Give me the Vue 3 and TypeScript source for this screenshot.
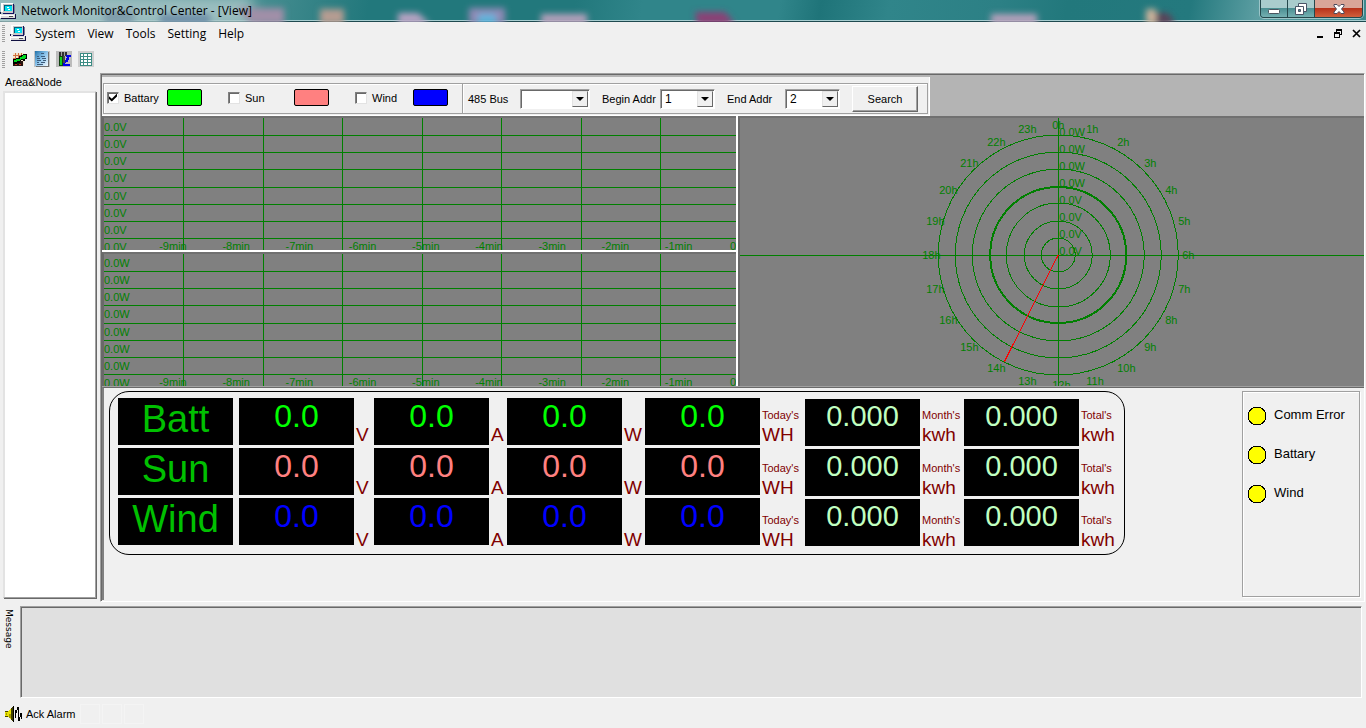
<script setup lang="ts">
import { ref } from 'vue'

interface Channel {
  name: string
  label: string
  tone: string
}

interface Reading {
  caption: string
  unit: string
  value: string
}

const menus: string[] = ['System', 'View', 'Tools', 'Setting', 'Help']

const channels: Channel[] = [
  { name: 'Battary', label: 'Batt', tone: 'batt' },
  { name: 'Sun', label: 'Sun', tone: 'sun' },
  { name: 'Wind', label: 'Wind', tone: 'wind' },
]

const readings: Reading[] = [
  { caption: '', unit: 'V', value: '0.0' },
  { caption: '', unit: 'A', value: '0.0' },
  { caption: '', unit: 'W', value: '0.0' },
  { caption: "Today's", unit: 'WH', value: '0.0' },
  { caption: "Month's", unit: 'kwh', value: '0.000' },
  { caption: "Total's", unit: 'kwh', value: '0.000' },
]

const alarms: string[] = ['Comm Error', 'Battary', 'Wind']

const shown = ref<string[]>(['Battary'])
const bus = ref<string>('')
const beginAddr = ref<string>('1')
const endAddr = ref<string>('2')

const charts = [
  { unit: 'V', title: 'Voltage' },
  { unit: 'W', title: 'Power' },
]
const gridRows = [0, 1, 2, 3, 4, 5, 6, 7].map((i) => Math.round((i * 137) / 8))
const gridCols = [1, 2, 3, 4, 5, 6, 7].map((i) => `${(i * 12.58).toFixed(2)}%`)
const minutes = [9, 8, 7, 6, 5, 4, 3, 2, 1, 0].map((m) => ({
  text: m === 0 ? '0' : `-${m}min`,
  x: `${(10 - m) * 10}%`,
  dx: m === 0 ? -6 : -8,
}))

const rings = [17, 34, 52, 86, 103, 120]
const ringLabels = ['W', 'W', 'W', 'W', 'V', 'V', 'V', 'V'].map((u, i) => ({
  text: `0.0${u}`,
  y: -119 + i * 17,
}))
const hours = Array.from({ length: 24 }, (_, h) => {
  const angle = (h * Math.PI) / 12
  return {
    text: `${h}h`,
    x: Math.round(-6 + 130 * Math.sin(angle)),
    y: Math.round(4 - 130 * Math.cos(angle)),
  }
})
</script>

<template>
  <div class="app">
    <header class="titlebar">
      <svg class="glass" width="100%" height="22" aria-hidden="true">
        <defs>
          <filter id="soft" x="-20%" y="-40%" width="140%" height="180%">
            <feGaussianBlur stdDeviation="3" />
          </filter>
          <filter id="softer" x="-20%" y="-60%" width="140%" height="220%">
            <feGaussianBlur stdDeviation="7" />
          </filter>
          <symbol id="pc" viewBox="0 0 16 16">
            <path d="M1 0h12v10H1z" fill="#c8c8c8" />
            <path d="M1 0h12v1H1zM1 0h2v9H1z" fill="#fff" />
            <path d="M4 2h8v1H4zM4 2h1v6H4z" fill="#006080" />
            <path d="M5 3h7v5H5z" fill="#00e0f0" />
            <path d="M7 4h2v1H7zM8 6h2v1H8z" fill="#fff" />
            <path d="M13 1h1v9h-1zM3 10h11v1H3z" fill="#101060" />
            <path d="M14 2h1v8h-1z" fill="#808090" />
            <path d="M0 11h15v4H0z" fill="#dcdcdc" />
            <path d="M0 11h1v4H0zM1 12h13v1H1z" fill="#fff" />
            <path d="M9 13h4v1H9z" fill="#505050" />
            <path d="M1 15h15v1H1zM15 11h1v4h-1zM0 9h1v2H0z" fill="#101040" />
          </symbol>
        </defs>
        <g filter="url(#softer)">
          <rect x="-10" y="-4" width="262" height="32" fill="#a9c7c8" opacity="0.85" />
        </g>
        <g filter="url(#soft)">
          <rect x="104" y="10" width="30" height="14" fill="#7f9dab" />
          <rect x="160" y="14" width="50" height="10" fill="#6f90a8" />
          <path d="M236 8h48v16h-32z" fill="#a08fa8" />
          <rect x="320" y="9" width="24" height="15" fill="#b59c92" />
          <path d="M398 13h20l12 11h-32z" fill="#b9a4c4" />
          <rect x="469" y="8" width="36" height="16" fill="#9089b5" />
          <rect x="478" y="14" width="18" height="10" fill="#62b4dc" />
          <rect x="541" y="14" width="46" height="10" fill="#b6a1bc" />
          <path d="M695 12h30l10 12h-38z" fill="#8c3f76" />
          <rect x="991" y="14" width="46" height="10" fill="#b6a1bc" />
          <rect x="1146" y="9" width="10" height="15" fill="#cdb49c" />
          <path d="M1156 13h12l8 11h-20z" fill="#5b4358" />
        </g>
      </svg>
      <svg class="pc" shape-rendering="crispEdges" aria-hidden="true"><use href="#pc" /></svg>
      <h1>Network Monitor&amp;Control Center - [View]</h1>
      <div class="caption">
        <button type="button" aria-label="Minimize">
          <svg width="14" height="14" viewBox="0 0 14 14"><rect x="1.500" y="7.500" width="11" height="4" rx="1" fill="#fff" stroke="#4a5560" /></svg>
        </button>
        <button type="button" aria-label="Restore">
          <svg width="14" height="14" viewBox="0 0 14 14">
            <path d="M4.500 1.500h8v8h-8z" fill="#fff" stroke="#4a5568" />
            <path d="M1.500 4.500h8v8h-8z" fill="#fff" stroke="#4a5568" />
            <path d="M4.500 7.500h2v2h-2z" fill="#4e8f92" stroke="#4a5568" />
          </svg>
        </button>
        <button type="button" class="close" aria-label="Close">
          <svg width="14" height="14" viewBox="0 0 14 14">
            <path d="M2 2.500h3l2 2 2-2h3v1.500L9.500 7l2.500 3v1.500H9l-2-2-2 2H2V10l2.500-3L2 4z" fill="#fff" stroke="#4d4a5c" />
          </svg>
        </button>
      </div>
    </header>

    <nav class="menubar" aria-label="Main">
      <span class="grip"></span>
      <svg class="pc" shape-rendering="crispEdges" aria-hidden="true"><use href="#pc" /></svg>
      <button v-for="m in menus" :key="m" type="button" class="menu">{{ m }}</button>
      <div class="mdi">
        <button type="button" aria-label="Minimize view">
          <svg width="9" height="9" viewBox="0 0 9 9" shape-rendering="crispEdges"><path d="M1 7h6v2H1z" /></svg>
        </button>
        <button type="button" aria-label="Restore view">
          <svg width="9" height="9" viewBox="0 0 9 9" shape-rendering="crispEdges">
            <path fill-rule="evenodd" d="M2 0h6v6H6V5h1V2H3v1H2zM0 3h6v6H0zM1 5h4v3H1z" />
          </svg>
        </button>
        <button type="button" aria-label="Close view">
          <svg width="9" height="9" viewBox="0 0 9 9"><path d="M1 1l7 7M8 1L1 8" stroke="#000" stroke-width="1.700" /></svg>
        </button>
      </div>
    </nav>

    <div class="toolbar">
      <span class="grip"></span>
      <button type="button" aria-label="Trend">
        <svg viewBox="0 0 16 16" shape-rendering="crispEdges">
          <path d="M1 2h11v12H1z" fill="#f4e4cc" />
          <path d="M1 4h11v1H1zM1 7h9v1H1zM3 2h1v7H3zM6 2h1v6H6zM9 2h1v4H9z" fill="#d07040" />
          <path d="M1 10h10v5H1z" fill="#281410" />
          <path d="M3 13h2v1H3zM7 13h2v1H7zM7 11h1v1H7z" fill="#c83020" />
          <path d="M1 8h3V7h3V5h2V4h2V3h4v5h-2v2h-2V9H9v1H8v2H5v1H1z" fill="#000" />
          <path d="M2 9h2V8h4V6h2V5h1V4h3v3h-1v1H9v1H8v1H5v1H2z" fill="#00d820" />
        </svg>
      </button>
      <button type="button" aria-label="Report">
        <svg viewBox="0 0 16 16" shape-rendering="crispEdges">
          <defs>
            <linearGradient id="sheet" x1="0" y1="0" x2="1" y2="1">
              <stop offset="0" stop-color="#2070a8" />
              <stop offset="0.500" stop-color="#8cc4ec" />
              <stop offset="1" stop-color="#f4faff" />
            </linearGradient>
          </defs>
          <path d="M0 0h16v16H0z" fill="#c4c4c4" />
          <path d="M1 0h13v15H1z" fill="url(#sheet)" />
          <path d="M14 1h1v15H2v-1h12z" fill="#707070" />
          <path d="M7 2h3v1H7zM3 5h2v1H3zM7 5h4v1H7zM3 7h3v1H3zM8 7h4v1H8zM3 9h4v1H3zM9 9h3v1H9zM3 11h2v1H3zM7 11h4v1H7zM3 13h6v1H3z" fill="#3c5c7c" />
        </svg>
      </button>
      <button type="button" aria-label="Devices">
        <svg viewBox="0 0 16 16" shape-rendering="crispEdges">
          <path d="M0 0h16v16H0z" fill="#bcbcbc" />
          <path d="M3 1h8v4H3z" fill="#303030" />
          <path d="M5 1h1v4H5zM8 1h1v4H8z" fill="#a0a0a0" />
          <path d="M3 5h4v10H3z" fill="#104010" />
          <path d="M4 6h2v8H4z" fill="#10d020" />
          <path d="M7 5h2v9H7z" fill="#484848" />
          <path d="M10 4h5v2h-2v3h-1v2h-2v1h-1v1h5v2H7v-3h2V9h1V7h1V6h-1z" fill="#0000e8" />
        </svg>
      </button>
      <button type="button" aria-label="Table">
        <svg viewBox="0 0 16 16" shape-rendering="crispEdges">
          <path d="M0 0h16v16H0z" fill="#cfcfcf" />
          <path d="M3 2h10v12H3z" fill="#fff" />
          <path fill-rule="evenodd" d="M2 2h12v13H2zM3 3v2h2V3zM6 3v2h3V3zM10 3v2h3V3zM3 6v2h2V6zM6 6v2h3V6zM10 6v2h3V6zM3 9v2h2V9zM6 9v2h3V9zM10 9v2h3V9zM3 12v2h2v-2zM6 12v2h3v-2zM10 12v2h3v-2z" fill="#3c8c84" />
        </svg>
      </button>
    </div>

    <div class="workspace">
      <aside class="area">
        <h2>Area&amp;Node</h2>
        <div class="tree"></div>
      </aside>

      <main class="view">
        <div class="band">
          <form class="controls" @submit.prevent>
            <div class="series">
              <div v-for="c in channels" :key="c.name" class="pick">
                <input :id="`show-${c.tone}`" v-model="shown" type="checkbox" :value="c.name" />
                <label :for="`show-${c.tone}`">{{ c.name }}</label>
                <span class="swatch" :class="c.tone"></span>
              </div>
            </div>
            <div class="query">
              <label for="bus" class="short">485 Bus</label>
              <span class="combo wide">
                <select id="bus" v-model="bus"><option value=""></option><option>COM1</option></select>
                <i></i>
              </span>
              <label for="begin">Begin Addr</label>
              <span class="combo">
                <select id="begin" v-model="beginAddr"><option>1</option><option>2</option></select>
                <i></i>
              </span>
              <label for="end">End Addr</label>
              <span class="combo">
                <select id="end" v-model="endAddr"><option>1</option><option>2</option></select>
                <i></i>
              </span>
              <button type="submit" class="search">Search</button>
            </div>
          </form>
        </div>

        <div class="plots">
          <div class="trends">
            <svg v-for="c in charts" :key="c.unit" class="trend" role="img" :aria-label="c.title">
              <g class="lines">
                <line v-for="y in gridRows.slice(1)" :key="y" x1="0" x2="100%" :y1="y" :y2="y" />
                <line v-for="x in gridCols" :key="x" :x1="x" :x2="x" y1="0" y2="100%" />
              </g>
              <text v-for="y in gridRows" :key="y" x="0" :y="y + 13">0.0{{ c.unit }}</text>
              <text v-for="m in minutes" :key="m.text" :x="m.x" :dx="m.dx" y="132">{{ m.text }}</text>
            </svg>
          </div>
          <svg class="polar" role="img" aria-label="Daily power">
            <line class="axis" x1="0" x2="100%" y1="137" y2="137" />
            <svg x="51%" y="137" overflow="visible">
              <line class="axis" x1="0" x2="0" y1="-137" y2="140" />
              <circle v-for="r in rings" :key="r" :r="r" />
              <circle class="heavy" r="68" />
              <text v-for="l in ringLabels" :key="l.y" x="1" :y="l.y">{{ l.text }}</text>
              <text v-for="h in hours" :key="h.text" :x="h.x" :y="h.y">{{ h.text }}</text>
              <line class="hand" x1="0" y1="0" x2="-54" y2="107" />
            </svg>
          </svg>
        </div>

        <div class="lower">
          <section class="readouts">
            <div v-for="c in channels" :key="c.label" class="row" :class="c.tone">
              <div class="lcd name">{{ c.label }}</div>
              <template v-for="(r, i) in readings" :key="i">
                <div class="lcd" :class="{ total: i > 3 }">{{ r.value }}</div>
                <div class="unit">
                  <small v-if="r.caption">{{ r.caption }}</small>
                  <b>{{ r.unit }}</b>
                </div>
              </template>
            </div>
          </section>
          <ul class="alarms">
            <li v-for="a in alarms" :key="a">
              <svg width="20" height="20" viewBox="0 0 20 20" shape-rendering="crispEdges" aria-hidden="true">
                <circle cx="10" cy="10" r="9" fill="#ff0" stroke="#000" />
              </svg>
              {{ a }}
            </li>
          </ul>
        </div>
      </main>
    </div>

    <section class="message">
      <h2>Message</h2>
      <div class="log"></div>
    </section>

    <footer class="status">
      <button type="button">
        <svg width="18" height="18" viewBox="0 0 18 18" shape-rendering="crispEdges" aria-hidden="true">
          <path d="M1 6h3l5-5v16l-5-5H1z" fill="#404000" />
          <path d="M1 7h3v4H1zM4 6h1v6H4zM5 5h1v8H5zM6 4h1v10H6z" fill="#e8e000" />
          <path d="M2 8h1v2H2zM5 9h2v4H5z" fill="#a09800" />
          <path d="M9 1v16M11 5v8M12 8l2-6 1 14 2-8v6" fill="none" stroke="#000" />
        </svg>
        Ack Alarm
      </button>
      <span></span><span></span><span></span>
    </footer>
  </div>
</template>

<style>
body {
  margin: 0;
  background: #f0f0f0;
}
</style>

<style scoped>
* {
  box-sizing: border-box;
}
.app {
  display: flex;
  flex-direction: column;
  min-height: 100vh;
  background: #f0f0f0;
  color: #000;
  font: 11px/14px "Liberation Sans", Arial, sans-serif;
}
button,
select,
input {
  margin: 0;
  padding: 0;
  border: 0;
  border-radius: 0;
  background: none;
  color: inherit;
  font: inherit;
}
h1,
h2 {
  margin: 0;
  font: inherit;
}
svg {
  display: block;
  flex: none;
}
.pc {
  width: 16px;
  height: 16px;
}

.titlebar {
  position: relative;
  display: flex;
  align-items: center;
  height: 22px;
  border-bottom: 1px solid #1f4a50;
  box-shadow: inset 0 -1px #a6cdd0;
  background: linear-gradient(100deg, #74a5a8 0, #4b9093 18%, #22787c 27%, #22787c 42%, #30858a 47%, #30858a 57%, #1f7479 60%, #30858a 65%, #2c8085 73%, #22787c 78%, #24797e 87%, #5c9ea2 92%, #3b888c 100%);
}
.glass {
  position: absolute;
  inset: 0;
}
.titlebar > .pc {
  position: relative;
}
.titlebar h1 {
  position: relative;
  margin-left: 5px;
  font: 12px/20px "Open Sans", "Noto Sans", sans-serif;
  white-space: nowrap;
}
.caption {
  position: relative;
  display: flex;
  align-self: flex-start;
  height: 18px;
  margin: 0 3px 0 auto;
  border: 1px solid #24484c;
  border-top: 0;
  border-radius: 0 0 4px 4px;
  box-shadow: 0 0 0 1px #9cc5c8;
  overflow: hidden;
}
.caption button {
  display: flex;
  align-items: center;
  justify-content: center;
  width: 27px;
  border-right: 1px solid #24484c;
  background: linear-gradient(#a9cccd 0 45%, #4c9093 50%, #74b0b2);
}
.caption .close {
  width: 47px;
  border: 0;
  background: linear-gradient(#d9a598 0 45%, #b8331b 50%, #d0603c);
}

.menubar {
  display: flex;
  align-items: center;
  height: 23px;
  font: 12px/20px "Open Sans", "Noto Sans", sans-serif;
}
.grip {
  width: 3px;
  height: 17px;
  margin-left: 2px;
  background: repeating-linear-gradient(#a0a0a0 0 1px, #f0f0f0 1px 2px);
}
.menubar .pc {
  margin: 0 3px 2px 5px;
}
.menu {
  padding: 0 6px;
}
.mdi {
  display: flex;
  gap: 9px;
  margin: 0 5px 0 auto;
}

.toolbar {
  display: flex;
  align-items: center;
  gap: 6px;
  height: 28px;
}
.toolbar .grip {
  margin-right: 1px;
}
.toolbar button,
.toolbar svg {
  width: 16px;
  height: 16px;
}

.workspace {
  display: flex;
  flex: 1;
}
.area {
  display: flex;
  flex-direction: column;
  width: 97px;
  margin: 1px 3px 4px 0;
  padding-left: 3px;
}
.area h2 {
  padding: 0 0 1px 2px;
  line-height: 16px;
}
.tree {
  flex: 1;
  margin-right: 1px;
  border: 1px solid #e3e3e3;
  border-width: 2px 1px 1px 2px;
  border-right-color: #a0a0a0;
  border-bottom-color: #a0a0a0;
  box-shadow: 1px 1px #696969;
  background: #fff;
}

.view {
  display: flex;
  flex: 1;
  flex-direction: column;
  min-width: 0;
  margin-right: 1px;
  border-top: 1px solid #a0a0a0;
  border-left: 1px solid #a0a0a0;
  border-right: 1px solid #fff;
  border-bottom: 1px solid #fff;
  box-shadow: inset 1px 1px #696969;
  padding: 1px 0 1px 1px;
}
.band {
  padding-top: 2px;
  background: #b4b4b4;
}
.controls {
  display: flex;
  width: 828px;
  height: 39px;
  padding: 6px 2px 2px 1px;
  background: #f0f0f0;
  box-shadow: inset -1px -1px #fff;
}
.series,
.query {
  display: flex;
  align-items: center;
  border: 1px solid #a0a0a0;
  box-shadow: inset 1px 1px #fff;
}
.series {
  gap: 26px;
  width: 359px;
  padding: 0 0 2px 3px;
  border-right: 0;
}
.query {
  flex: 1;
  padding-left: 5px;
}
.pick {
  display: flex;
  align-items: center;
  width: 95px;
}
.pick:nth-child(2) {
  width: 101px;
}
.pick:nth-child(3) {
  width: 93px;
}
.pick input {
  appearance: none;
  display: grid;
  place-content: center;
  width: 12px;
  height: 12px;
  margin-right: 5px;
  border: 1px solid #808080;
  border-right-color: #e3e3e3;
  border-bottom-color: #e3e3e3;
  box-shadow: inset 1px 1px #696969;
  background: #fff;
}
.pick input:checked::before {
  content: "";
  width: 8px;
  height: 8px;
  background: #000;
  clip-path: polygon(0 35%, 35% 65%, 100% 0, 100% 38%, 35% 100%, 0 70%);
}
.swatch {
  width: 35px;
  height: 17px;
  margin-left: auto;
  border: 1px solid #000;
  border-radius: 2px;
}
.swatch.batt {
  background: #0f0;
}
.swatch.sun {
  background: #ff8080;
}
.swatch.wind {
  background: #00f;
}
.query label {
  width: 58px;
  white-space: nowrap;
}
.query label.short {
  width: 52px;
}
.combo {
  position: relative;
  width: 55px;
  height: 20px;
  margin-right: 12px;
  border: 1px solid #a0a0a0;
  border-right-color: #fff;
  border-bottom-color: #fff;
  background: #fff;
  box-shadow: inset 1px 1px #696969;
}
.combo.wide {
  width: 70px;
}
.combo select {
  appearance: none;
  width: 100%;
  height: 18px;
  padding: 0 16px 0 4px;
  font-size: 12px;
}
.combo i {
  position: absolute;
  top: 1px;
  right: 1px;
  bottom: 1px;
  display: grid;
  place-content: center;
  width: 16px;
  border: 1px solid #e3e3e3;
  border-right-color: #696969;
  border-bottom-color: #696969;
  background: #f0f0f0;
  pointer-events: none;
}
.combo i::before {
  content: "";
  border: 4px solid transparent;
  border-top-color: #000;
  border-bottom: 0;
}
.search {
  width: 66px;
  height: 26px;
  border: 1px solid #fff;
  border-right-color: #696969;
  border-bottom-color: #696969;
  box-shadow: inset -1px -1px #a0a0a0;
  background: #f0f0f0;
}

.plots {
  display: grid;
  grid-template-columns: 636fr 626fr;
  height: 271px;
  border-bottom: 1px solid #a0a0a0;
  background: #808080;
  color: #008000;
}
.trends {
  display: flex;
  flex-direction: column;
  gap: 2px;
  border-right: 2px solid #fff;
  background: #fff;
}
.trend,
.polar {
  width: 100%;
  border: 1px solid #696969;
  border-width: 2px 0 0 2px;
  border-top-color: #707070;
  background: #808080;
}
.trend {
  flex: 1 1 0;
  height: 134px;
  min-height: 0;
}
.polar {
  height: 270px;
}
.plots text {
  fill: #008000;
}
.lines line,
.axis,
.polar circle {
  fill: none;
  stroke: #008000;
  shape-rendering: crispEdges;
}
.polar .heavy {
  stroke-width: 2px;
}
.hand {
  stroke: #f00;
  shape-rendering: crispEdges;
}

.lower {
  display: flex;
  flex: 1;
  align-items: flex-start;
  justify-content: space-between;
  border-top: 1px solid #696969;
  border-left: 2px solid #808080;
}
.readouts {
  display: flex;
  flex-direction: column;
  gap: 2px;
  margin: 3px 0 0 5px;
  padding: 6px 0 8px 8px;
  border: 1px solid #000;
  border-radius: 20px;
}
.row {
  display: grid;
  grid-template-columns: 115px 6px 115px 20px 115px 18px 115px 23px 115px 45px 115px 44px 115px 45px;
  height: 48px;
}
.row .lcd:nth-child(2) {
  grid-column: 3;
}
.lcd {
  height: 47px;
  background: #000;
  font-size: 32px;
  line-height: 37px;
  text-align: center;
}
.batt .lcd {
  color: #0f0;
}
.sun .lcd {
  color: #ff8080;
}
.wind .lcd {
  color: #00f;
}
.row .lcd.name {
  color: #00c000;
  font-size: 38px;
  line-height: 43px;
}
.row .lcd.total {
  margin-top: 1px;
  color: #c0ffc0;
  font-size: 29px;
  line-height: 35px;
}
.unit {
  display: flex;
  flex-direction: column;
  justify-content: flex-end;
  padding-left: 2px;
  color: #800000;
}
.sun .unit {
  margin-bottom: -3px;
}
.wind .unit {
  margin-bottom: -5px;
}
.unit small {
  margin-bottom: 2px;
  font-size: 11px;
  line-height: 14px;
}
.unit b {
  font-size: 19px;
  font-weight: 400;
  line-height: 22px;
}
.alarms {
  display: flex;
  flex-direction: column;
  gap: 19px;
  width: 118px;
  height: 206px;
  margin: 3px 4px 3px 0;
  padding: 14px 0 0 4px;
  border: 1px solid #a0a0a0;
  box-shadow: inset 1px 1px #fff, 1px 1px #fff;
  list-style: none;
  font-size: 13px;
  line-height: 18px;
}
.alarms li {
  display: flex;
  gap: 7px;
  height: 20px;
}

.message {
  display: flex;
  height: 92px;
  margin: 4px 4px 2px 0;
}
.message h2 {
  width: 20px;
  padding: 3px 4px 0 0;
  font: 9px/14px "DejaVu Sans", sans-serif;
  writing-mode: vertical-rl;
}
.log {
  flex: 1;
  border: 1px solid #a0a0a0;
  border-right-color: #fff;
  border-bottom-color: #fff;
  box-shadow: inset 1px 1px #696969;
  background: #e0e0e0;
}

.status {
  display: flex;
  align-items: center;
  height: 29px;
  padding: 0 0 2px 4px;
}
.status button {
  display: flex;
  align-items: center;
  gap: 4px;
  margin-right: 4px;
}
.status span {
  width: 20px;
  height: 20px;
  margin-right: 2px;
  border: 1px solid #f4f4f4;
}
</style>
